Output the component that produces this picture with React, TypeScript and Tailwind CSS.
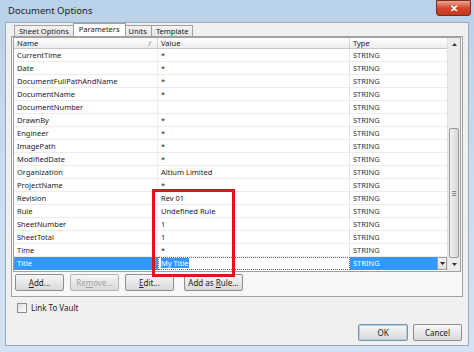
import React from "react";

const rows: [string, string][] = [
  ["CurrentTime", "*"],
  ["Date", "*"],
  ["DocumentFullPathAndName", "*"],
  ["DocumentName", "*"],
  ["DocumentNumber", ""],
  ["DrawnBy", "*"],
  ["Engineer", "*"],
  ["ImagePath", "*"],
  ["ModifiedDate", "*"],
  ["Organization", "Altium Limited"],
  ["ProjectName", "*"],
  ["Revision", "Rev 01"],
  ["Rule", "Undefined Rule"],
  ["SheetNumber", "1"],
  ["SheetTotal", "1"],
  ["Time", "*"],
];

function Btn({ children, disabled, className = "" }: { children: React.ReactNode; disabled?: boolean; className?: string }) {
  return (
    <div
      className={`h-[17px] flex items-center justify-center rounded-[2px] border border-[#8e8f8f] bg-gradient-to-b from-[#f6f6f6] via-[#e8e8e8] to-[#d9d9d9] text-[8px] ${disabled ? "text-[#a0a0a0] border-[#b5b5b5]" : "text-[#222]"} ${className}`}
    >
      {children}
    </div>
  );
}

export default function App() {
  return (
    <div
      className="relative w-[474px] h-[352px] overflow-hidden bg-gradient-to-b from-[#b9d1ea] via-[#c9dcf0] to-[#d3e3f3]"
      style={{ fontFamily: '"Noto Sans", "Open Sans", sans-serif' }}
    >
      {/* title bar */}
      <div className="h-[22px] flex items-center pl-[8px] relative">
        <span className="text-[9.5px] text-[#1e1e1e] leading-none">Document Options</span>
        <div className="absolute right-[3px] top-0 w-[35px] h-[16px] rounded-b-[3px] border border-[#7a2a20] bg-gradient-to-b from-[#e8a493] via-[#d2462c] to-[#c23a20] flex items-center justify-center">
          <span className="text-white text-[10px] font-bold leading-none">✕</span>
        </div>
      </div>

      {/* client */}
      <div className="mx-[5px] h-[324px] bg-[#f0f0f0] border border-[#98a9bd] flex flex-col">
        {/* tabs */}
        <div className="flex items-end h-[13px] pl-[8px]">
          <div className="h-[11px] px-[4px] border border-b-0 border-[#a0a0a0] bg-gradient-to-b from-[#f4f4f4] to-[#e4e4e4] text-[7.5px] leading-[10px] text-[#222]">Sheet Options</div>
          <div className="h-[13px] px-[5px] border border-b-0 border-[#a0a0a0] bg-white text-[7.5px] leading-[11px] text-[#222] -mx-[1px] relative z-10">Parameters</div>
          <div className="h-[11px] px-[4px] border border-b-0 border-l-0 border-[#a0a0a0] bg-gradient-to-b from-[#f4f4f4] to-[#e4e4e4] text-[7.5px] leading-[10px] text-[#222]">Units</div>
          <div className="h-[11px] px-[4px] border border-b-0 border-l-0 border-[#a0a0a0] bg-gradient-to-b from-[#f4f4f4] to-[#e4e4e4] text-[7.5px] leading-[10px] text-[#222]">Template</div>
        </div>

        {/* panel */}
        <div className="ml-[5px] w-[452px] h-[261px] border border-[#a0a0a0] bg-[#f7f7f7] flex flex-col">
          {/* grid */}
          <div className="mx-[1px] h-[235px] border border-[#a0a0a0] bg-white flex">
            <div className="w-[433px] flex flex-col">
              {/* header */}
              <div className="h-[11px] flex bg-gradient-to-b from-white to-[#ececec] border-b border-[#c8c8c8] text-[7.5px] text-[#222] leading-[10px]">
                <div className="w-[144px] pl-[3px] flex justify-between pr-[6px] border-r border-[#d5d5d5]">
                  <span>Name</span>
                  <span className="text-[#777]">/</span>
                </div>
                <div className="w-[192px] pl-[3px] border-r border-[#d5d5d5]">Value</div>
                <div className="flex-1 pl-[3px]">Type</div>
              </div>
              {rows.map(([n, v]) => (
                <div key={n} className="h-[13px] flex border-b border-[#ececec] text-[7.5px] text-[#222] leading-[12px]">
                  <div className="w-[144px] pl-[3px] border-r border-[#ececec]">{n}</div>
                  <div className="w-[192px] pl-[3px] border-r border-[#e4e4e4]">{v}</div>
                  <div className="flex-1 pl-[3px] text-[#333]">STRING</div>
                </div>
              ))}
              {/* selected row */}
              <div className="h-[13px] flex text-[7.5px] leading-[12px]">
                <div className="w-[144px] pl-[3px] bg-[#3399ff] text-white">Title</div>
                <div className="w-[192px] border border-dotted border-[#666] bg-white pl-[2px] leading-[10px]">
                  <span className="bg-[#3399ff] text-white">My Title</span>
                </div>
                <div className="flex-1 flex">
                  <div className="flex-1 pl-[3px] bg-[#3399ff] text-white">STRING</div>
                  <div className="w-[10px] border border-[#a0a0a0] bg-gradient-to-b from-[#f4f4f4] to-[#dcdcdc] flex items-center justify-center">
                    <svg width="5" height="3" viewBox="0 0 5 3"><path d="M0 0h5L2.5 3z" fill="#222" /></svg>
                  </div>
                </div>
              </div>
            </div>
            {/* scrollbar */}
            <div className="flex-1 bg-[#ececec] border-l border-[#e0e0e0] flex flex-col">
              <div className="h-[12px] flex items-center justify-center">
                <svg width="5" height="3" viewBox="0 0 5 3"><path d="M0 3h5L2.5 0z" fill="#333" /></svg>
              </div>
              <div className="h-[78px]" />
              <div className="h-[130px] mx-[1px] rounded-[2px] border border-[#9a9a9a] bg-gradient-to-r from-[#f2f2f2] via-[#e4e4e4] to-[#d6d6d6] flex items-center justify-center">
                <div className="flex flex-col gap-[1px]">
                  <div className="w-[4px] h-[1px] bg-[#888]" />
                  <div className="w-[4px] h-[1px] bg-[#888]" />
                  <div className="w-[4px] h-[1px] bg-[#888]" />
                </div>
              </div>
              <div className="flex-1 flex items-center justify-center">
                <svg width="5" height="3" viewBox="0 0 5 3"><path d="M0 0h5L2.5 3z" fill="#333" /></svg>
              </div>
            </div>
          </div>
          {/* buttons */}
          <div className="flex mt-[2px] pl-[3px] gap-[6px]">
            <Btn className="w-[49px]"><span><u>A</u>dd...</span></Btn>
            <Btn className="w-[49px]" disabled><span>Re<u>m</u>ove...</span></Btn>
            <Btn className="w-[49px]"><span><u>E</u>dit...</span></Btn>
            <Btn className="w-[59px] ml-[4px]"><span>Add as <u>R</u>ule...</span></Btn>
          </div>
        </div>

        {/* checkbox */}
        <div className="flex items-center mt-[5px] ml-[11px] gap-[4px]">
          <div className="w-[10px] h-[10px] border border-[#8f8f8f] bg-gradient-to-br from-[#dcdcdc] to-white" />
          <span className="text-[8px] text-[#222]">Link To Vault</span>
        </div>

        <div className="flex-1" />
        <div className="flex justify-end gap-[5px] pr-[6px] mb-[4px]">
          <Btn className="w-[50px] h-[17px] border-[#3c7fb1] shadow-[inset_0_0_0_1px_#9cd4f5]">OK</Btn>
          <Btn className="w-[49px] h-[17px]">Cancel</Btn>
        </div>
      </div>

      {/* red highlight */}
      <div className="absolute left-[152px] top-[189px] w-[83px] h-[88px] border-[3px] border-[#e3121c]" />
    </div>
  );
}
